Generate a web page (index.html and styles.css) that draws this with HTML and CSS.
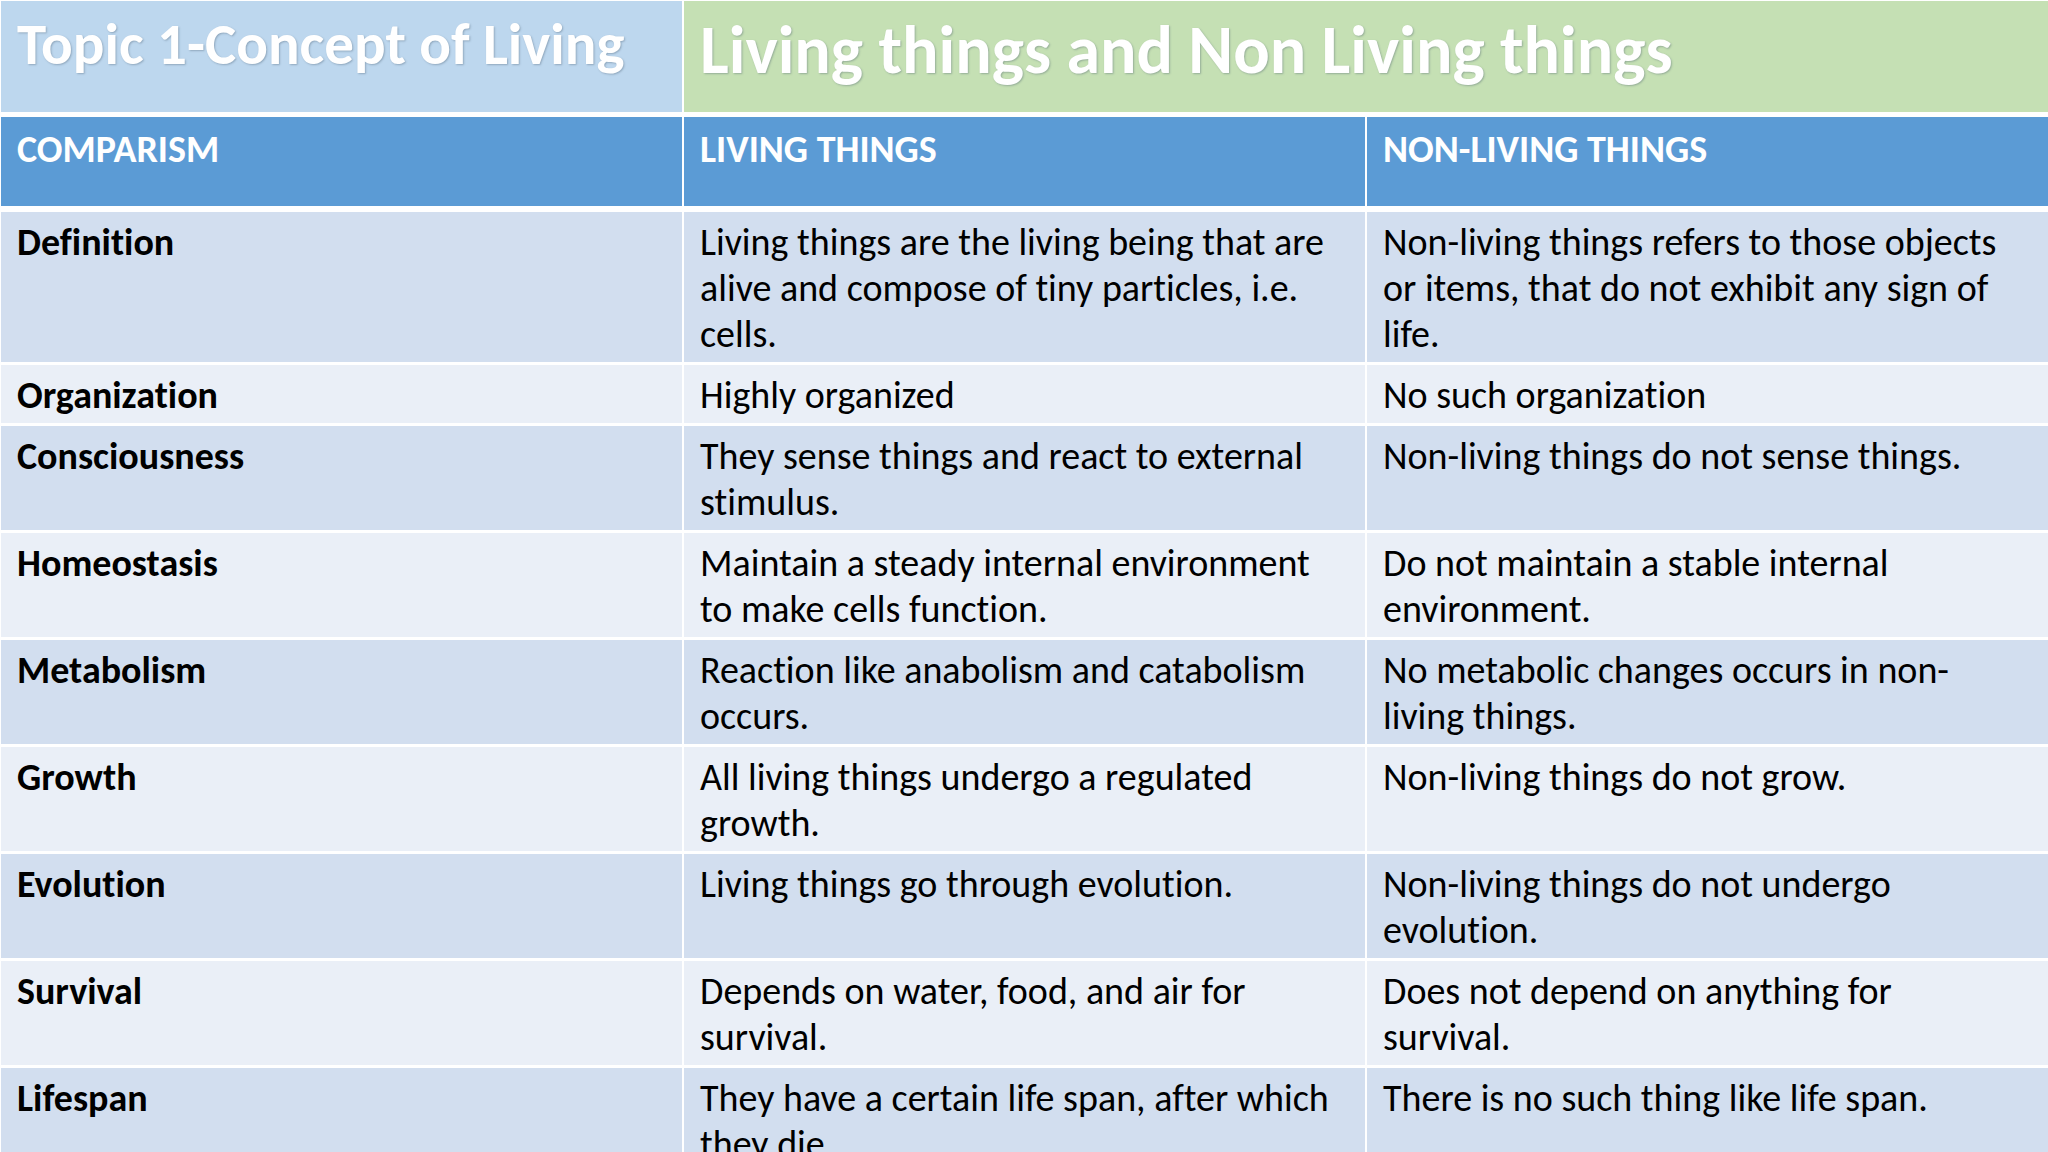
FILE: index.html
```html
<!DOCTYPE html>
<html>
<head>
<meta charset="utf-8">
<title>Living things and Non Living things</title>
<link rel="stylesheet" href="styles.css">
</head>
<body>
<div class="slide">
  <div class="title-row">
    <div class="title-cell topic"><h1>Topic 1-Concept of Living</h1></div>
    <div class="title-cell main"><h2>Living things and Non Living things</h2></div>
  </div>
  <div class="table">
    <div class="row head">
      <div class="cell">COMPARISM</div>
      <div class="cell">LIVING THINGS</div>
      <div class="cell">NON-LIVING THINGS</div>
    </div>
    <div class="row band">
      <div class="cell key">Definition</div>
      <div class="cell">Living things are the living being that are<br>alive and compose of tiny particles, i.e.<br>cells.</div>
      <div class="cell">Non-living things refers to those objects<br>or items, that do not exhibit any sign of<br>life.</div>
    </div>
    <div class="row light">
      <div class="cell key">Organization</div>
      <div class="cell">Highly organized</div>
      <div class="cell">No such organization</div>
    </div>
    <div class="row band">
      <div class="cell key">Consciousness</div>
      <div class="cell">They sense things and react to external<br>stimulus.</div>
      <div class="cell">Non-living things do not sense things.</div>
    </div>
    <div class="row light">
      <div class="cell key">Homeostasis</div>
      <div class="cell">Maintain a steady internal environment<br>to make cells function.</div>
      <div class="cell">Do not maintain a stable internal<br>environment.</div>
    </div>
    <div class="row band">
      <div class="cell key">Metabolism</div>
      <div class="cell">Reaction like anabolism and catabolism<br>occurs.</div>
      <div class="cell">No metabolic changes occurs in non-<br>living things.</div>
    </div>
    <div class="row light">
      <div class="cell key">Growth</div>
      <div class="cell">All living things undergo a regulated<br>growth.</div>
      <div class="cell">Non-living things do not grow.</div>
    </div>
    <div class="row band">
      <div class="cell key">Evolution</div>
      <div class="cell">Living things go through evolution.</div>
      <div class="cell">Non-living things do not undergo<br>evolution.</div>
    </div>
    <div class="row light">
      <div class="cell key">Survival</div>
      <div class="cell">Depends on water, food, and air for<br>survival.</div>
      <div class="cell">Does not depend on anything for<br>survival.</div>
    </div>
    <div class="row band">
      <div class="cell key">Lifespan</div>
      <div class="cell">They have a certain life span, after which<br>they die.</div>
      <div class="cell">There is no such thing like life span.</div>
    </div>
  </div>
</div>
</body>
</html>
```
FILE: styles.css
```css
html, body {
  margin: 0;
  padding: 0;
  background: #ffffff;
}
body {
  width: 2048px;
  height: 1152px;
  overflow: hidden;
  font-family: "Carlito", "Lato", "Liberation Sans", sans-serif;
  font-variant-ligatures: none;
  color: #000000;
}
.slide {
  width: 2048px;
  padding-left: 1px;
  padding-top: 1px;
  box-sizing: border-box;
}
.title-row {
  display: grid;
  grid-template-columns: 681px 1fr;
  column-gap: 2px;
  height: 111px;
}
.title-cell {
  display: flex;
  align-items: flex-start;
  padding-left: 16px;
  color: #ffffff;
  text-shadow: 1px 1px 2px rgba(60, 80, 100, 0.35);
}
.topic {
  background: #bdd7ee;
}
.main {
  background: #c5e0b4;
}
h1, h2 {
  margin: 0;
  font-weight: 700;
  white-space: nowrap;
}
h1 {
  font-size: 59px;
  line-height: 62px;
  margin-top: 12px;
}
h2 {
  font-size: 68px;
  line-height: 72px;
  margin-top: 13px;
}
.table {
  margin-top: 5px;
  display: flex;
  flex-direction: column;
  row-gap: 3px;
}
.row {
  display: grid;
  grid-template-columns: 681px 681px 681px;
  column-gap: 2px;
}
.cell {
  padding: 7px 10px 5px 16px;
  font-size: 38px;
  line-height: 46px;
  white-space: nowrap;
}
.head {
  margin-bottom: 3px;
}
.head .cell {
  background: #5b9bd5;
  color: #ffffff;
  font-weight: 700;
  height: 89px;
  box-sizing: border-box;
  padding-top: 9px;
}
.band .cell {
  background: #d2deef;
}
.light .cell {
  background: #eaeff7;
}
.band:first-of-type .cell {
  padding-top: 8px;
  padding-bottom: 6px;
}
.key {
  font-weight: 700;
}
```
